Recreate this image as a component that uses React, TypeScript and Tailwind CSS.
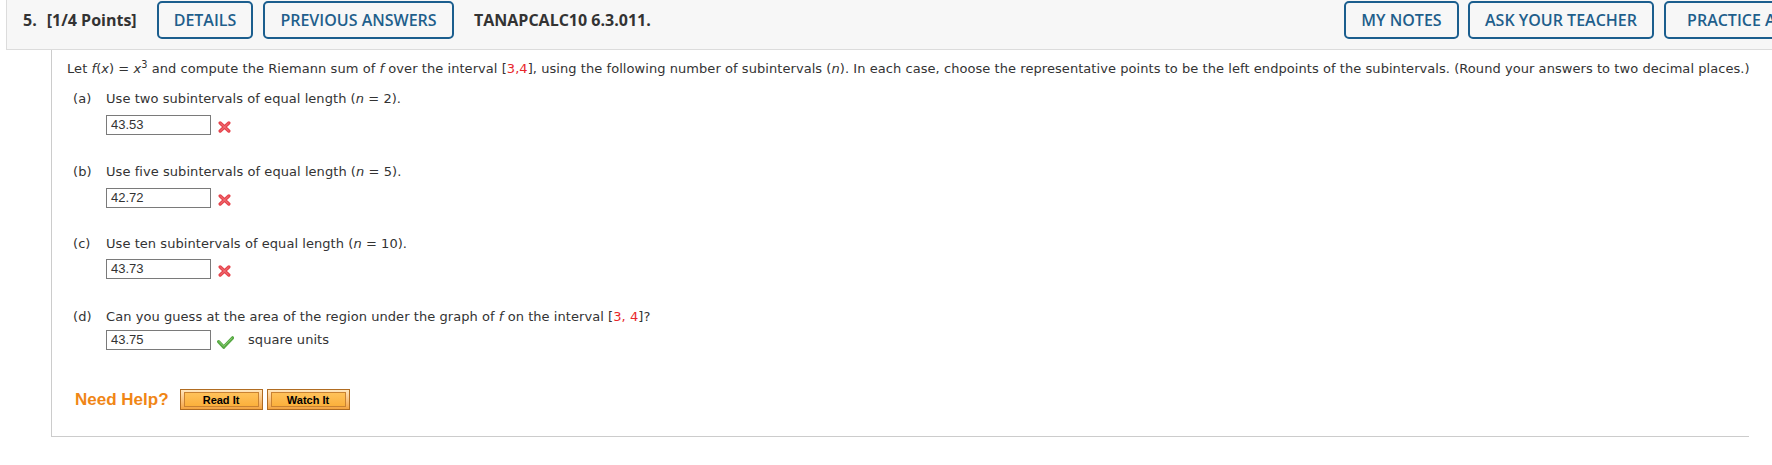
import type { ReactNode } from "react";

function HeaderButton({ label, className }: { label: string; className: string }) {
  return (
    <div
      className={`flex h-[38px] shrink-0 items-center justify-center whitespace-nowrap rounded-[5px] border-2 border-[#1b5e8e] text-[16px] font-semibold text-[#1f5f8c] ${className}`}
    >
      {label}
    </div>
  );
}

function WrongMark() {
  return (
    <svg width="13" height="12" viewBox="0 0 13 12" className="mb-[2px] ml-[7px] self-end">
      <path d="M2.2 2 L10.8 10 M10.8 2 L2.2 10" stroke="#e6434b" strokeWidth="3.4" strokeLinecap="round" />
      <path d="M2.6 2.3 L10.4 9.7 M10.4 2.3 L2.6 9.7" stroke="#f27a80" strokeWidth="1" strokeLinecap="round" />
    </svg>
  );
}

function RightMark() {
  return (
    <svg width="17" height="13" viewBox="0 0 17 13" className="mb-[1px] ml-[6px] self-end">
      <path
        d="M1.6 5.6 L6.7 11.2 L15.6 1.8"
        fill="none"
        stroke="#56a842"
        strokeWidth="3.2"
        strokeLinecap="round"
        strokeLinejoin="round"
      />
      <path d="M2.2 5.6 L6.7 10.4 L15 2.2" fill="none" stroke="#86cc72" strokeWidth="1" strokeLinecap="round" />
    </svg>
  );
}

function AnswerBox({ value }: { value: string }) {
  return (
    <div className="flex h-[20px] w-[105px] items-center border border-[#7a7a7a] bg-white pl-[4px] font-['Liberation_Sans',Arial,sans-serif] text-[13px] tracking-normal text-[#333]">
      {value}
    </div>
  );
}

function Part({
  label,
  children,
  answer,
  className,
  inputGap,
}: {
  label: string;
  children: ReactNode;
  answer: ReactNode;
  className: string;
  inputGap: string;
}) {
  return (
    <div className={`ml-[6px] flex ${className}`}>
      <div className="w-[33px] shrink-0">{label}</div>
      <div>
        <div className="whitespace-nowrap">{children}</div>
        <div className={`flex ${inputGap}`}>{answer}</div>
      </div>
    </div>
  );
}

function HelpButton({ label }: { label: string }) {
  return (
    <div className="h-[21px] w-[83px] border border-[#b06c22] bg-gradient-to-b from-[#ffe6bd] to-[#f4a43e] px-[3px] py-[2px]">
      <div className="flex h-full items-center justify-center border border-[#c98232] bg-gradient-to-b from-[#ffc25a] to-[#fbb03b] font-['Liberation_Sans',Arial,sans-serif] text-[11px] font-bold text-black">
        {label}
      </div>
    </div>
  );
}

export default function App() {
  return (
    <div className="h-[465px] w-[1772px] overflow-hidden bg-white text-[#333]">
      <div className="ml-[6px] h-[50px] w-[1880px] border-b border-l border-[#dcdcdc] bg-[#f7f7f7] pl-[16px] pr-[22px] font-['Open_Sans',sans-serif]">
        <div className="flex h-[40px] items-center">
          <div className="w-[134px] shrink-0 whitespace-nowrap text-[16px] font-bold text-[#333]">
            5.<span className="ml-[10px]">[1/4 Points]</span>
          </div>
          <HeaderButton label="DETAILS" className="w-[96px]" />
          <HeaderButton label="PREVIOUS ANSWERS" className="ml-[10px] w-[191px]" />
          <div className="ml-[20px] whitespace-nowrap text-[16px] font-bold text-[#333]">TANAPCALC10 6.3.011.</div>
          <div className="flex-1" />
          <HeaderButton label="MY NOTES" className="w-[115px]" />
          <HeaderButton label="ASK YOUR TEACHER" className="ml-[9px] w-[186px]" />
          <HeaderButton label="PRACTICE ANOTHER" className="ml-[10px] w-[200px]" />
        </div>
      </div>

      <div className="ml-[51px] h-[387px] w-[1698px] border-b border-l border-[#cccccc] pl-[15px] pt-[11px] font-['DejaVu_Sans',Verdana,sans-serif] text-[13px] leading-[16px] tracking-[0.06px] text-[#333]">
        <div className="whitespace-nowrap">
          Let <i>f</i>(<i>x</i>) = <i>x</i>
          <sup>3</sup> and compute the Riemann sum of <i>f</i> over the interval [
          <span className="text-[#e8262a]">3,4</span>], using the following number of subintervals (<i>n</i>). In
          each case, choose the representative points to be the left endpoints of the subintervals. (Round your
          answers to two decimal places.)
        </div>

        <Part
          label="(a)"
          className="mt-[14px]"
          inputGap="mt-[8px]"
          answer={
            <>
              <AnswerBox value="43.53" />
              <WrongMark />
            </>
          }
        >
          Use two subintervals of equal length (<i>n</i> = 2).
        </Part>

        <Part
          label="(b)"
          className="mt-[29px]"
          inputGap="mt-[8px]"
          answer={
            <>
              <AnswerBox value="42.72" />
              <WrongMark />
            </>
          }
        >
          Use five subintervals of equal length (<i>n</i> = 5).
        </Part>

        <Part
          label="(c)"
          className="mt-[28px]"
          inputGap="mt-[7px]"
          answer={
            <>
              <AnswerBox value="43.73" />
              <WrongMark />
            </>
          }
        >
          Use ten subintervals of equal length (<i>n</i> = 10).
        </Part>

        <Part
          label="(d)"
          className="mt-[30px]"
          inputGap="mt-[5px] items-center"
          answer={
            <>
              <AnswerBox value="43.75" />
              <RightMark />
              <span className="ml-[14px]">square units</span>
            </>
          }
        >
          Can you guess at the area of the region under the graph of <i>f</i> on the interval [
          <span className="text-[#e8262a]">3, 4</span>]?
        </Part>

        <div className="ml-[8px] mt-[39px] flex h-[21px] items-center font-['Liberation_Sans',Arial,sans-serif] tracking-normal">
          <span className="text-[17px] font-bold text-[#f08616]">Need Help?</span>
          <div className="ml-[11px]">
            <HelpButton label="Read It" />
          </div>
          <div className="ml-[4px]">
            <HelpButton label="Watch It" />
          </div>
        </div>
      </div>
    </div>
  );
}
